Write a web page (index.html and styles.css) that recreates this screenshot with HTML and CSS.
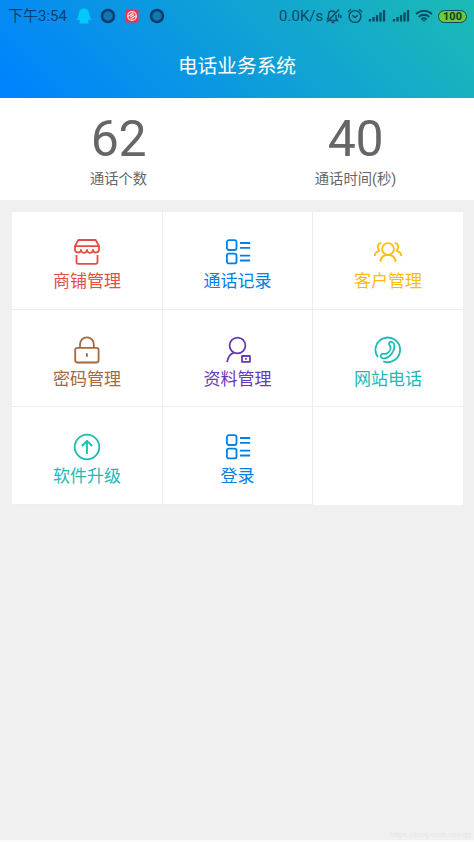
FILE: index.html
```
<!DOCTYPE html>
<html lang="zh-CN">
<head>
<meta charset="utf-8">
<title>电话业务系统</title>
<link rel="stylesheet" href="styles.css">
</head>
<body>
<svg class="defs" width="0" height="0">
  <symbol id="list" viewBox="0 0 28 28"><rect x="2.900" y="2.200" width="9.600" height="9.800" rx="2"/><rect x="2.900" y="15.600" width="9.600" height="9.800" rx="2"/><path d="M16 5h10.200M16 9.800h10.200M16 17.600h10.200M16 22.500h10.200"/></symbol>
  <symbol id="dot" viewBox="0 0 16 16"><circle cx="8" cy="8" r="6" fill="#1477b0" stroke="#08406f" stroke-width="2.600"/></symbol>
  <symbol id="signal" viewBox="0 0 18 14"><path d="M2 10v2.500M5.500 8v4.500M9 6v6.500M12.500 3.500v9M16 1v11.500" fill="none" stroke="#0b4a62" stroke-width="2.300"/></symbol>
</svg>
<header class="header">
  <div class="status">
    <span class="time">下午3:54</span>
    <div class="notices">
      <svg width="16" height="16" viewBox="0 0 16 16"><path d="M8 .5c-3.300 0-5 2.200-5 5.200C2.500 7.500 1 9.500 1 12c.6.500 1.300 0 2-.8.2 1 .8 1.800 1.400 2.500-.9.400-1.200 1-.9 1.800h9c.3-.8 0-1.400-.9-1.800.6-.7 1.200-1.500 1.400-2.500.7.800 1.400 1.300 2 .8 0-2.500-1.500-4.500-2-6.300 0-3-1.700-5.200-5-5.200z" fill="#04c8fa"/></svg>
      <svg width="16" height="16"><use href="#dot"/></svg>
      <svg width="16" height="16" viewBox="0 0 16 16"><rect x="1.500" y="1.500" width="13" height="13" rx="1.500" fill="#f3304f"/><g fill="none" stroke="#ffe4e4" stroke-width="1.300"><circle cx="8" cy="8" r="4.300"/><path d="M4.300 8.300l4.800-3.300M6 9.300l4-2.800M6.900 11l4.800-3.300"/></g></svg>
      <svg width="16" height="16"><use href="#dot"/></svg>
    </div>
    <span class="speed">0.0K/s</span>
    <div class="system">
      <svg width="17" height="16" viewBox="0 0 17 16" fill="none" stroke="#0b4a62" stroke-width="1.400"><path d="M4.500 12.500h8l-1.500-2V7M2 11.500l1.500-2V6.500C3.500 4.500 5 3 7 3c1.300 0 2.300.4 3 1.200M6.500 14.500h3M14 1.500L2 14M13.800 5.500v4M15.800 7v3"/></svg>
      <svg width="16" height="16" viewBox="0 0 16 16" fill="none" stroke="#0b4a62" stroke-width="1.400"><circle cx="8" cy="8.500" r="5.900"/><path d="M5.300 7.200L8 9.500l2.800-2.300M1 4l3-2.700M15 4l-3-2.700"/></svg>
      <svg width="18" height="14"><use href="#signal"/></svg>
      <svg width="18" height="14"><use href="#signal"/></svg>
      <svg width="18" height="14" viewBox="0 0 18 14" fill="none" stroke="#0b4a62" stroke-width="1.900"><path d="M1 5c4.600-4.200 11.400-4.200 16 0M3.700 7.900c3.100-2.800 7.500-2.800 10.600 0M6.300 10.500c1.600-1.400 3.800-1.400 5.400 0"/><path d="M7.300 11.300h3.400L9 13.300z" fill="#0b4a62" stroke="none"/></svg>
      <span class="battery">100</span>
    </div>
  </div>
  <h1 class="title">电话业务系统</h1>
</header>
<section class="stats">
  <div class="stat"><strong>62</strong><span>通话个数</span></div>
  <div class="stat"><strong>40</strong><span>通话时间(秒)</span></div>
</section>
<main class="grid">
  <div class="cell red"><svg class="icon" viewBox="0 0 28 28"><path d="M5.300 2h17.400L26 8v3.200c0 4-5.600 4.400-6 .6-.4 4-5.700 4-6 0-.4 4-5.700 4-6 0-.5 3.800-6 3.400-6-.6V8zM2.500 8.200h23M3.500 17v7q0 1.800 1.800 1.800h17.400q1.800 0 1.800-1.800v-7"/></svg><span>商铺管理</span></div>
  <div class="cell blue"><svg class="icon"><use href="#list"/></svg><span>通话记录</span></div>
  <div class="cell yellow"><svg class="icon" viewBox="0 0 28 28"><circle cx="14" cy="11" r="5.900"/><path d="M6.300 23.800c.5-4 3.200-7 7.700-7s7.200 3 7.700 7M7.200 5.200c-3.900 0-4.400 5-1.700 7.400C2.600 13.500 1 15.500.5 18.200M20.800 5.200c3.900 0 4.400 5 1.700 7.400 2.900.9 4.500 2.900 5 5.600"/></svg><span>客户管理</span></div>
  <div class="cell brown"><svg class="icon" viewBox="0 0 28 28"><rect x="2.200" y="11.800" width="23.400" height="14.700" rx="2.200"/><path d="M7 11.500V8.300C7 4.200 10 1.400 13.900 1.400s6.900 2.800 6.900 6.900v3.200M13.900 17.200v3.600"/></svg><span>密码管理</span></div>
  <div class="cell purple"><svg class="icon" viewBox="0 0 28 28"><circle cx="13.500" cy="9.500" r="7.900"/><path d="M9.900 16.700C6.400 18 3.700 21.700 3.100 26.200M18 20h7.900v5.800H18z"/><path d="M21.100 22.900h1.700"/></svg><span>资料管理</span></div>
  <div class="cell teal"><svg class="icon" viewBox="0 0 28 28"><path d="M4 21.300A12.300 12.300 0 1 1 9.300 25.300"/><path d="M15.700 9.600c-1.800-2.500.2-4.500 2.500-3.600 2.900 1.200 2.700 5.500.9 9.300-1.800 3.500-4.800 6.500-8.500 7-3.200.5-4.900-2.200-3.300-3.900 1.500-1.400 3.200 0 4.700-.6 2.300-1 4.600-3.600 4.600-5.600 0-1-.4-1.800-.9-2.600z"/></svg><span>网站电话</span></div>
  <div class="cell teal"><svg class="icon" viewBox="0 0 28 28"><circle cx="14" cy="14" r="12.300"/><path d="M14 21V8M8.800 13L14 7.800l5.200 5.200"/></svg><span>软件升级</span></div>
  <div class="cell blue"><svg class="icon"><use href="#list"/></svg><span>登录</span></div>
  <div class="cell"></div>
</main>
<footer class="mark">https://blog.csdn.net/qq</footer>
</body>
</html>
```
FILE: styles.css
```
* { box-sizing: border-box; }
body {
  margin: 0;
  height: 842px;
  display: flex;
  flex-direction: column;
  overflow: hidden;
  background: #f0f0f0;
  border-bottom: 2px solid #fafafa;
  font-family: Roboto, "Noto Sans CJK SC", sans-serif;
}
svg { display: block; }
.defs { position: absolute; }
.header {
  height: 98px;
  flex: none;
  background: linear-gradient(45deg, #0081ff, #1cbbb4);
}
.status {
  height: 32px;
  display: flex;
  align-items: center;
  padding: 0 7px 0 8px;
  color: #0b4070;
  font-size: 15px;
  white-space: nowrap;
}
.time { width: 68px; padding-bottom: 3px; }
.notices { display: flex; gap: 8.200px; }
.speed { margin-left: auto; width: 46px; color: #0b4a62; }
.system { display: flex; align-items: center; gap: 5.200px; }
.battery {
  width: 29px;
  height: 13px;
  border: 1.500px solid #0b4a62;
  border-radius: 7px;
  background: #70c63c;
  color: #123c28;
  font-size: 11px;
  font-weight: 700;
  line-height: 11px;
  text-align: center;
}
.title {
  margin: 0;
  height: 66px;
  padding-top: 2px;
  line-height: 66px;
  text-align: center;
  color: #fff;
  font-size: 19.700px;
  font-weight: 400;
}
.stats {
  height: 102px;
  flex: none;
  display: flex;
  background: #fff;
  color: #666;
}
.stat {
  flex: 1;
  display: flex;
  flex-direction: column;
  align-items: center;
  padding-top: 13px;
}
.stat strong { font-size: 50px; font-weight: 400; line-height: 57px; letter-spacing: -.4px; }
.stat span { font-size: 14.300px; line-height: 22px; }
.grid {
  width: 451px;
  height: 293px;
  flex: none;
  margin: 12px 0 0 12px;
  display: grid;
  grid-template: repeat(3, 1fr) / 151px 150px 150px;
  background: #fff;
}
.cell {
  display: flex;
  flex-direction: column;
  align-items: center;
  padding-top: 26px;
  border-right: 1px solid #eee;
  border-bottom: 1px solid #eee;
  font-size: 17px;
  line-height: 24px;
}
.cell:nth-child(3n) { border-right: 0; }
.cell:last-child { border-bottom: 0; }
.cell span { margin-top: 3px; }
.icon {
  width: 28px;
  height: 28px;
  fill: none;
  stroke: currentColor;
  stroke-width: 1.800;
  stroke-linejoin: round;
}
.red { color: #e54d42; }
.blue { color: #0081e8; }
.yellow { color: #fbbd08; }
.brown { color: #a5673f; }
.purple { color: #6739b6; }
.teal { color: #1cbbb4; }
.mark {
  margin-top: auto;
  padding-right: 3px;
  text-align: right;
  color: #e5e5e5;
  font-size: 7.500px;
  line-height: 10px;
}
```
